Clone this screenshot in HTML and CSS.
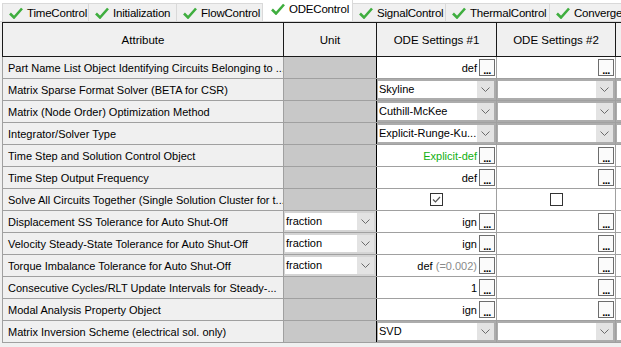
FILE: index.html
```html
<!DOCTYPE html>
<html lang="en">
<head>
    <meta charset="UTF-8">
    <title>ODEControl</title>
    <link rel="stylesheet" href="styles.css">
</head>
<body>
    <div class="tabs">
        <div class="tab"><svg class="check" viewBox="0 0 14 12"><path d="M1 6.5 L5 10.5 L13 1.5"/></svg>TimeControl</div>
        <div class="tab"><svg class="check" viewBox="0 0 14 12"><path d="M1 6.5 L5 10.5 L13 1.5"/></svg>Initialization</div>
        <div class="tab"><svg class="check" viewBox="0 0 14 12"><path d="M1 6.5 L5 10.5 L13 1.5"/></svg>FlowControl</div>
        <div class="tab active"><svg class="check" viewBox="0 0 14 12"><path d="M1 6.5 L5 10.5 L13 1.5"/></svg>ODEControl</div>
        <div class="tab"><svg class="check" viewBox="0 0 14 12"><path d="M1 6.5 L5 10.5 L13 1.5"/></svg>SignalControl</div>
        <div class="tab"><svg class="check" viewBox="0 0 14 12"><path d="M1 6.5 L5 10.5 L13 1.5"/></svg>ThermalControl</div>
        <div class="tab"><svg class="check" viewBox="0 0 14 12"><path d="M1 6.5 L5 10.5 L13 1.5"/></svg>Converge</div>
    </div>

    <div class="grid-wrap">
        <table class="grid">
            <colgroup>
                <col class="c-attr"><col class="c-unit"><col class="c-val"><col class="c-val2"><col class="c-rest">
            </colgroup>
            <thead>
                <tr>
                    <th>Attribute</th>
                    <th>Unit</th>
                    <th>ODE Settings #1</th>
                    <th>ODE Settings #2</th>
                    <th></th>
                </tr>
            </thead>
            <tbody>
                <tr>
                    <td class="attr">Part Name List Object Identifying Circuits Belonging to ...</td>
                    <td class="unit off"></td>
                    <td><div class="val">def<span class="dots">...</span></div></td>
                    <td><div class="val"><span class="dots">...</span></div></td>
                    <td class="rest"></td>
                </tr>
                <tr>
                    <td class="attr">Matrix Sparse Format Solver (BETA for CSR)</td>
                    <td class="unit off"></td>
                    <td><div class="combo"><span class="combo-text">Skyline</span><span class="arrow"><svg viewBox="0 0 9 5"><path d="M0.5 0.5 L4.5 4.5 L8.5 0.5"/></svg></span></div></td>
                    <td><div class="combo"><span class="combo-text"></span><span class="arrow"><svg viewBox="0 0 9 5"><path d="M0.5 0.5 L4.5 4.5 L8.5 0.5"/></svg></span></div></td>
                    <td class="rest"><div class="combo"></div></td>
                </tr>
                <tr>
                    <td class="attr">Matrix (Node Order) Optimization Method</td>
                    <td class="unit off"></td>
                    <td><div class="combo"><span class="combo-text">Cuthill-McKee</span><span class="arrow"><svg viewBox="0 0 9 5"><path d="M0.5 0.5 L4.5 4.5 L8.5 0.5"/></svg></span></div></td>
                    <td><div class="combo"><span class="combo-text"></span><span class="arrow"><svg viewBox="0 0 9 5"><path d="M0.5 0.5 L4.5 4.5 L8.5 0.5"/></svg></span></div></td>
                    <td class="rest"><div class="combo"></div></td>
                </tr>
                <tr>
                    <td class="attr">Integrator/Solver Type</td>
                    <td class="unit off"></td>
                    <td><div class="combo"><span class="combo-text">Explicit-Runge-Ku...</span><span class="arrow"><svg viewBox="0 0 9 5"><path d="M0.5 0.5 L4.5 4.5 L8.5 0.5"/></svg></span></div></td>
                    <td><div class="combo"><span class="combo-text"></span><span class="arrow"><svg viewBox="0 0 9 5"><path d="M0.5 0.5 L4.5 4.5 L8.5 0.5"/></svg></span></div></td>
                    <td class="rest"><div class="combo"></div></td>
                </tr>
                <tr>
                    <td class="attr">Time Step and Solution Control Object</td>
                    <td class="unit off"></td>
                    <td><div class="val"><span class="green">Explicit-def</span><span class="dots">...</span></div></td>
                    <td><div class="val"><span class="dots">...</span></div></td>
                    <td class="rest"></td>
                </tr>
                <tr>
                    <td class="attr">Time Step Output Frequency</td>
                    <td class="unit off"></td>
                    <td><div class="val">def<span class="dots">...</span></div></td>
                    <td><div class="val"><span class="dots">...</span></div></td>
                    <td class="rest"></td>
                </tr>
                <tr>
                    <td class="attr">Solve All Circuits Together (Single Solution Cluster for t...</td>
                    <td class="unit off"></td>
                    <td><div class="cb-cell"><span class="cb"><svg viewBox="0 0 11 11"><path d="M2 5.5 L4.5 8 L9 3"/></svg></span></div></td>
                    <td><div class="cb-cell"><span class="cb"></span></div></td>
                    <td class="rest"></td>
                </tr>
                <tr>
                    <td class="attr">Displacement SS Tolerance for Auto Shut-Off</td>
                    <td class="unit"><div class="combo light"><span class="combo-text">fraction</span><span class="arrow"><svg viewBox="0 0 9 5"><path d="M0.5 0.5 L4.5 4.5 L8.5 0.5"/></svg></span></div></td>
                    <td><div class="val">ign<span class="dots">...</span></div></td>
                    <td><div class="val"><span class="dots">...</span></div></td>
                    <td class="rest"></td>
                </tr>
                <tr>
                    <td class="attr">Velocity Steady-State Tolerance for Auto Shut-Off</td>
                    <td class="unit"><div class="combo light"><span class="combo-text">fraction</span><span class="arrow"><svg viewBox="0 0 9 5"><path d="M0.5 0.5 L4.5 4.5 L8.5 0.5"/></svg></span></div></td>
                    <td><div class="val">ign<span class="dots">...</span></div></td>
                    <td><div class="val"><span class="dots">...</span></div></td>
                    <td class="rest"></td>
                </tr>
                <tr>
                    <td class="attr">Torque Imbalance Tolerance for Auto Shut-Off</td>
                    <td class="unit"><div class="combo light"><span class="combo-text">fraction</span><span class="arrow"><svg viewBox="0 0 9 5"><path d="M0.5 0.5 L4.5 4.5 L8.5 0.5"/></svg></span></div></td>
                    <td><div class="val">def&nbsp;<span class="muted">(=0.002)</span><span class="dots">...</span></div></td>
                    <td><div class="val"><span class="dots">...</span></div></td>
                    <td class="rest"></td>
                </tr>
                <tr>
                    <td class="attr">Consecutive Cycles/RLT Update Intervals for Steady-...</td>
                    <td class="unit off"></td>
                    <td><div class="val">1<span class="dots">...</span></div></td>
                    <td><div class="val"><span class="dots">...</span></div></td>
                    <td class="rest"></td>
                </tr>
                <tr>
                    <td class="attr">Modal Analysis Property Object</td>
                    <td class="unit off"></td>
                    <td><div class="val">ign<span class="dots">...</span></div></td>
                    <td><div class="val"><span class="dots">...</span></div></td>
                    <td class="rest"></td>
                </tr>
                <tr>
                    <td class="attr">Matrix Inversion Scheme (electrical sol. only)</td>
                    <td class="unit off"></td>
                    <td><div class="combo"><span class="combo-text">SVD</span><span class="arrow"><svg viewBox="0 0 9 5"><path d="M0.5 0.5 L4.5 4.5 L8.5 0.5"/></svg></span></div></td>
                    <td><div class="combo"><span class="combo-text"></span><span class="arrow"><svg viewBox="0 0 9 5"><path d="M0.5 0.5 L4.5 4.5 L8.5 0.5"/></svg></span></div></td>
                    <td class="rest"><div class="combo"></div></td>
                </tr>
            </tbody>
        </table>
    </div>
</body>
</html>
```

FILE: styles.css
```css
html, body {
    margin: 0;
    padding: 0;
    width: 621px;
    height: 347px;
    overflow: hidden;
    background-color: #f0f0f0;
    font-family: 'Liberation Sans', Arial, sans-serif;
    font-size: 11px;
    color: #000;
}

/* tab strip */
.tabs {
    display: flex;
    align-items: flex-end;
    height: 22px;
    padding-left: 2px;
    background-color: #ffffff;
    border-bottom: 1px solid #d9d9d9;
    box-sizing: border-box;
    white-space: nowrap;
    overflow: hidden;
}

.tab {
    display: flex;
    align-items: center;
    flex: none;
    height: 19px;
    padding-left: 6px;
    margin-bottom: -1px;
    background-color: #f0f0f0;
    border: 1px solid #d9d9d9;
    border-left: none;
    box-sizing: border-box;
    font-size: 11.5px;
    letter-spacing: -0.2px;
}

.tab:nth-child(1) { width: 87px; border-left: 1px solid #d9d9d9; }
.tab:nth-child(2) { width: 88px; }
.tab:nth-child(3) { width: 86px; }
.tab:nth-child(4) { width: 90px; }
.tab:nth-child(5) { width: 93px; }
.tab:nth-child(6) { width: 104px; }
.tab:nth-child(7) { width: 80px; }

.tab.active {
    height: 23px;
    padding: 0 0 4px 8px;
    background-color: #ffffff;
    border-bottom-color: #ffffff;
}

.check {
    width: 14px;
    height: 12px;
    margin-right: 4px;
    flex: none;
}

.check path {
    fill: none;
    stroke: #3fae3f;
    stroke-width: 2.6;
}

/* grid */
.grid-wrap {
    padding-left: 2px;
    overflow: hidden;
}

.grid {
    border-collapse: collapse;
    table-layout: fixed;
    width: 640px;
}

.c-attr { width: 281px; }
.c-unit { width: 93px; }
.c-val { width: 120px; }
.c-val2 { width: 119px; }
.c-rest { width: 27px; }

.grid th {
    height: 33px;
    padding: 0;
    font-weight: normal;
    font-size: 11.5px;
    background-color: #f0f0f0;
    border: 1px solid #1a1a1a;
    text-align: center;
}

.grid td {
    height: 21px;
    padding: 0;
    border: 1px solid #a0a0a0;
    background-color: #ffffff;
    white-space: nowrap;
    overflow: hidden;
}

.grid td.attr {
    padding-left: 5px;
    background-color: #f0f0f0;
}

.grid td.unit {
    border-right: 1px solid #000;
}

.grid td.off {
    background-color: #c8c8c8;
}

.val {
    display: flex;
    justify-content: flex-end;
    align-items: center;
    height: 21px;
    padding-right: 1px;
}

.dots {
    display: inline-flex;
    align-items: flex-end;
    justify-content: center;
    width: 14px;
    height: 15px;
    margin-left: 2px;
    border: 1px solid #6d6d6d;
    background-color: #fbfbfb;
    font-weight: bold;
    line-height: 10px;
    letter-spacing: -0.5px;
}

.green {
    color: #12b012;
}

.muted {
    color: #8a8a8a;
}

.combo {
    display: flex;
    height: 21px;
    border: 2px solid #acacac;
    border-left-width: 1px;
    box-sizing: border-box;
    background-color: #ffffff;
}

.combo.light {
    border-color: #d4d4d4;
}

.combo-text {
    flex: 1;
    padding-left: 1px;
    line-height: 17px;
    overflow: hidden;
}

.arrow {
    display: flex;
    align-items: center;
    justify-content: center;
    width: 17px;
    background-color: #e3e3e3;
}

.arrow svg {
    width: 9px;
    height: 5px;
}

.arrow path {
    fill: none;
    stroke: #6a6a6a;
    stroke-width: 1;
}

.cb-cell {
    display: flex;
    justify-content: center;
    align-items: center;
    height: 21px;
}

.cb {
    display: flex;
    width: 11px;
    height: 11px;
    border: 1px solid #333;
    background-color: #fff;
}

.cb svg {
    width: 11px;
    height: 11px;
}

.cb path {
    fill: none;
    stroke: #555;
    stroke-width: 1.2;
}
```
